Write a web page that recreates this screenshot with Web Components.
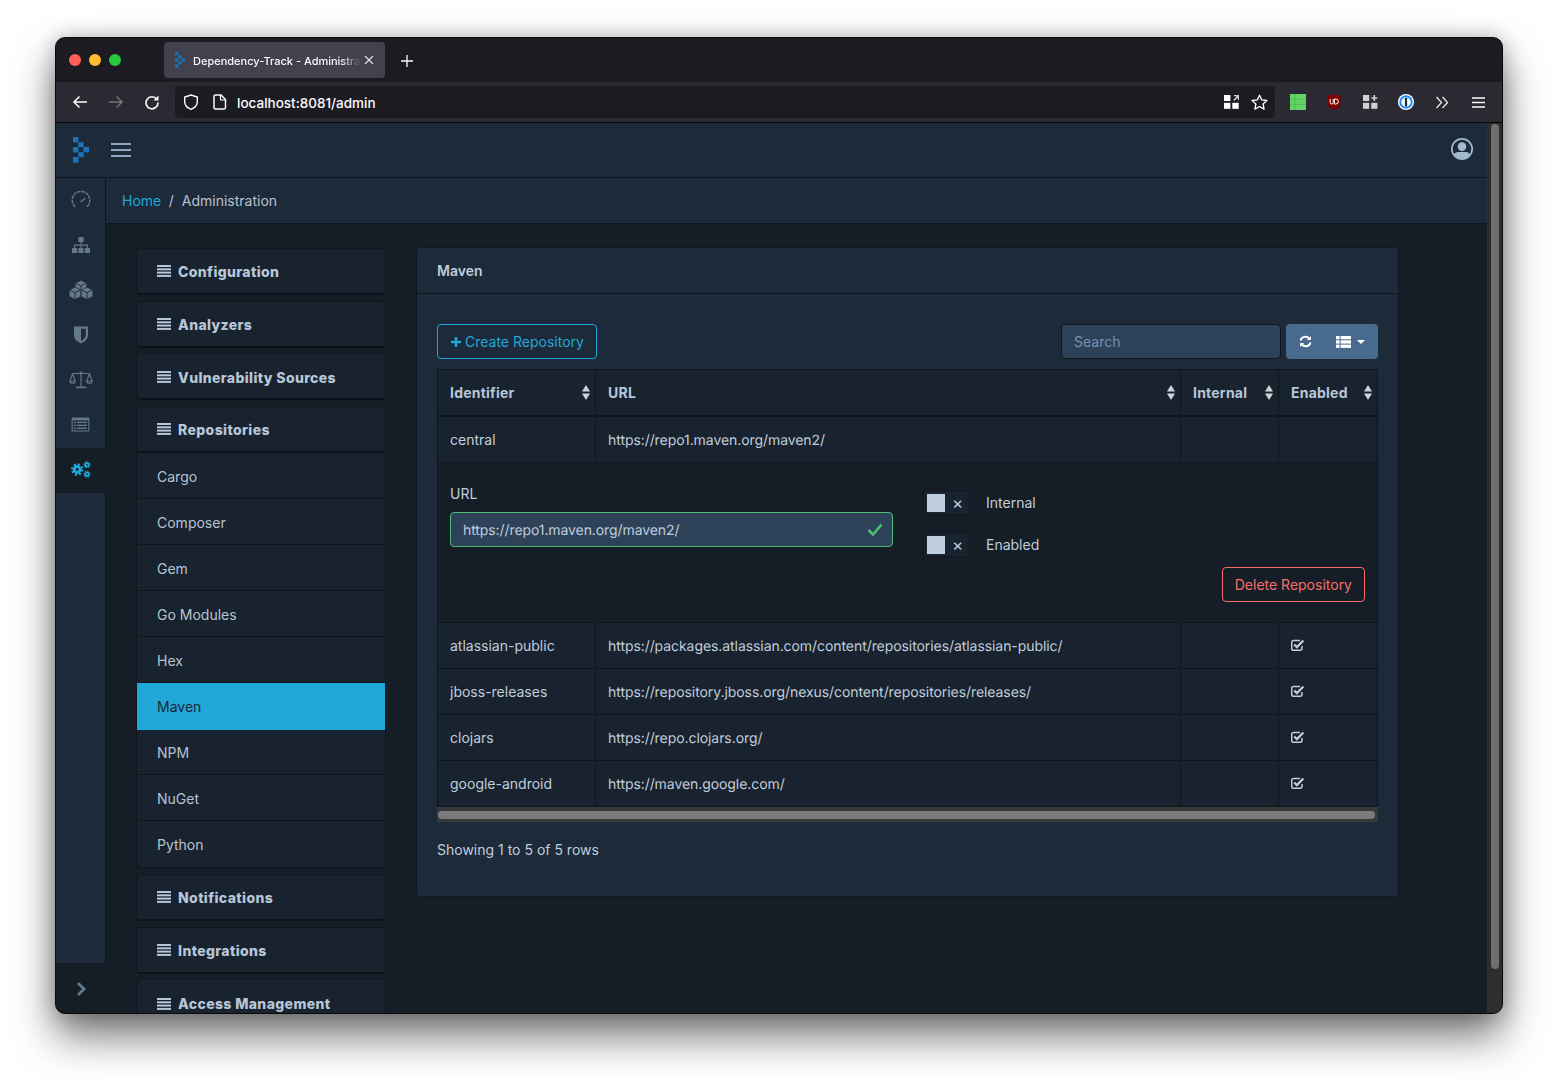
<!DOCTYPE html>
<html lang="en"><head><meta charset="utf-8"><title>Dependency-Track - Administration</title>
<style>
html,body{margin:0;padding:0;background:#fff}
body{font:14px/21px Inter,"Noto Sans",sans-serif;color:#c0cddb;padding:37px 55px 74px;overflow:hidden;height:977px}
</style></head><body>
<browser-window>
  <tab-strip slot="chrome">Dependency-Track - Administration</tab-strip>
  <url-toolbar slot="chrome">localhost:8081/admin</url-toolbar>
  <app-header></app-header>
  <div style="display:flex;flex:1;min-height:0">
    <app-sidebar></app-sidebar>
    <div style="flex:1;min-width:0;display:flex;flex-direction:column">
      <bread-crumb><a>Home</a><span>Administration</span></bread-crumb>
      <admin-layout>
        <admin-nav slot="nav">
          <nav-card>Configuration</nav-card>
          <nav-card>Analyzers</nav-card>
          <nav-card>Vulnerability Sources</nav-card>
          <nav-card>Repositories</nav-card>
          <nav-group>
            <nav-item>Cargo</nav-item><nav-item>Composer</nav-item><nav-item>Gem</nav-item><nav-item>Go Modules</nav-item><nav-item>Hex</nav-item><nav-item active>Maven</nav-item><nav-item>NPM</nav-item><nav-item>NuGet</nav-item><nav-item>Python</nav-item>
          </nav-group>
          <nav-card>Notifications</nav-card>
          <nav-card>Integrations</nav-card>
          <nav-card>Access Management</nav-card>
        </admin-nav>
        <repo-panel heading="Maven">
          <repo-toolbar><span slot="create">Create Repository</span></repo-toolbar>
          <repo-table>
            <repo-head></repo-head>
            <repo-row><span slot="id">central</span><span slot="url">https://repo1.maven.org/maven2/</span></repo-row>
            <repo-detail></repo-detail>
            <repo-row enabled><span slot="id">atlassian-public</span><span slot="url">https://packages.atlassian.com/content/repositories/atlassian-public/</span></repo-row>
            <repo-row enabled><span slot="id">jboss-releases</span><span slot="url">https://repository.jboss.org/nexus/content/repositories/releases/</span></repo-row>
            <repo-row enabled><span slot="id">clojars</span><span slot="url">https://repo.clojars.org/</span></repo-row>
            <repo-row enabled><span slot="id">google-android</span><span slot="url">https://maven.google.com/</span></repo-row>
          </repo-table>
          <h-scroll></h-scroll>
          <div style="margin-top:17px">Showing 1 to 5 of 5 rows</div>
        </repo-panel>
      </admin-layout>
    </div>
  </div>
</browser-window>
<script>
const BG='#1c2a39';
const cube=(x,y)=>`<path d="M${x} ${y-6.2}l5.800 2.700v6.600l-5.800 2.900-5.800-2.900v-6.600z" fill="currentColor" stroke="${BG}" stroke-width=".7"/><path d="M${x-5.200} ${y-3.200}l5.200 2.500 5.200-2.500M${x} ${y-.7}v6.400" stroke="${BG}" stroke-width=".9" fill="none"/>`;
const gear=(x,y,r,s)=>`<circle cx="${x}" cy="${y}" r="${r}" fill="none" stroke="currentColor" stroke-width="${s}"/><circle cx="${x}" cy="${y}" r="${r+s*.72}" fill="none" stroke="currentColor" stroke-width="${s*.75}" stroke-dasharray="${(r+s*.72)*.785*.5} ${(r+s*.72)*.785*.5}"/>`;
const ICONS={
 logo:['0 0 16 26',`<g fill="#1d71b8"><rect x="0" y="0" width="5.4" height="5.4"/><rect x="5.2" y="5.2" width="5.4" height="5"/><rect x="0" y="10" width="5.4" height="5.4"/><rect x="10.4" y="10" width="5.6" height="5.4"/><rect x="5.2" y="15.2" width="5.4" height="5"/><rect x="0" y="20" width="5.4" height="5.8"/></g>`],
 burger:['0 0 20 16',`<g fill="#8fa5bd"><rect y="1" width="20" height="2"/><rect y="7" width="20" height="2"/><rect y="13" width="20" height="2"/></g>`],
 user:['0 0 24 24',`<circle cx="12" cy="12" r="11" fill="#a2b9d0"/><circle cx="12" cy="12" r="9.3" fill="#1c2a39"/><clipPath id="c"><circle cx="12" cy="12" r="10"/></clipPath><g clip-path="url(#c)" fill="#a2b9d0"><circle cx="12" cy="9.6" r="4.3"/><path d="M3 24v-4.500c0-3 3-4.600 5.500-4.600h7c2.500 0 5.500 1.600 5.500 4.600V24z"/></g>`],
 tach:['0 0 20 20',`<g fill="none" stroke="currentColor" stroke-width="1.5"><path d="M4.200 16.800A8.800 8.800 0 1 1 15.800 16.800" stroke-dasharray="3.600 .7"/><path d="M10 11.500l3.800-2.700" stroke-linecap="round"/></g>`],
 sitemap:['0 0 20 20',`<g fill="currentColor"><rect x="7.400" y="2" width="5.200" height="5" rx=".6"/><rect x="1" y="13" width="5.200" height="5" rx=".6"/><rect x="7.400" y="13" width="5.200" height="5" rx=".6"/><rect x="13.800" y="13" width="5.200" height="5" rx=".6"/></g><path d="M10 7v6M3.600 13v-2.900h12.800V13" fill="none" stroke="currentColor" stroke-width="1.100"/>`],
 cubes:['0 0 24 20',cube(12,6.6)+cube(6,13.4)+cube(18,13.4)],
 shield:['0 0 20 20',`<path d="M3 1.500h14v8.500c0 4.300-3.600 6.800-7 8.500-3.400-1.700-7-4.200-7-8.500z" fill="currentColor"/><path d="M10 3.800h4.800V10c0 2.900-2.500 4.700-4.800 6z" fill="#1c2a39"/>`],
 scale:['0 0 24 20',`<g fill="none" stroke="currentColor" stroke-width="1.100"><path d="M3.500 3.500h17M12 3v14M7 17.400h10" /><path d="M3.500 3.800.8 11.200M3.500 3.800l2.800 7.400M20.500 3.800l-2.800 7.400M20.500 3.800l2.700 7.400"/><path d="M.8 11.300h5.500a2.800 2.600 0 0 1-5.500 0zM17.700 11.300h5.500a2.800 2.600 0 0 1-5.500 0z"/></g><circle cx="12" cy="3" r="1.500" fill="currentColor"/><rect x="6.800" y="16.800" width="10.400" height="1.400" fill="currentColor"/>`],
 listalt:['0 0 20 16',`<rect x=".5" y=".5" width="19" height="15" rx="1.500" fill="currentColor"/><rect x="1.700" y="3.600" width="16.600" height="10.700" fill="#1c2a39"/><g fill="currentColor"><rect x="3" y="5" width="2.400" height="1.500"/><rect x="3" y="8.200" width="2.400" height="1.500"/><rect x="3" y="11.300" width="2.400" height="1.500"/><rect x="6.500" y="5" width="10.500" height="1.500"/><rect x="6.500" y="8.200" width="10.500" height="1.500"/><rect x="6.500" y="11.300" width="10.500" height="1.500"/></g>`],
 cogs:['0 0 20 17',gear(6.200,8.500,2.900,3)+gear(16,3.800,1.700,1.700)+gear(16,13.200,1.700,1.700)],
 chevron:['0 0 10 16',`<path d="M2 2l6 6-6 6" fill="none" stroke="currentColor" stroke-width="2.800"/>`],
 lines:['0 0 14 12',`<g fill="currentColor"><rect width="14" height="2"/><rect y="3.300" width="14" height="2"/><rect y="6.600" width="14" height="2"/><rect y="9.900" width="14" height="2"/></g>`],
 plus:['0 0 12 12',`<path d="M6 1v10M1 6h10" stroke="currentColor" stroke-width="2.600"/>`],
 refresh:['0 0 14 14',`<g fill="none" stroke="#fff" stroke-width="2.100"><path d="M1.700 6a5.300 5.300 0 0 1 9.300-2.200"/><path d="M12.300 8a5.300 5.300 0 0 1-9.300 2.200"/></g><path d="M12.800 1v4.400H8.400zM1.200 13V8.600h4.400z" fill="#fff"/>`],
 cols:['0 0 15 12',`<g fill="#fff"><rect width="3.600" height="3.300"/><rect x="4.600" width="10.400" height="3.300"/><rect y="4.300" width="3.600" height="3.300"/><rect x="4.600" y="4.300" width="10.400" height="3.300"/><rect y="8.600" width="3.600" height="3.300"/><rect x="4.600" y="8.600" width="10.400" height="3.300"/></g>`],
 caret:['0 0 8 4',`<path d="M0 0h8L4 4z" fill="#fff"/>`],
 sort:['0 0 8 15',`<path d="M4 0l4 6.500H0zM4 15l4-6.500H0z" fill="#cfd3d7"/>`],
 check:['0 0 16 13',`<path d="M1.500 7l4.500 4.500L14.500 1.500" fill="none" stroke="#4dbd74" stroke-width="2.600"/>`],
 checksq:['0 0 14 12',`<path d="M11 7v2.500A1.800 1.800 0 0 1 9.200 11.300H2.500A1.800 1.800 0 0 1 .7 9.500V3.300A1.800 1.800 0 0 1 2.500 1.500H9" fill="none" stroke="#c0cddb" stroke-width="1.500"/><path d="M3.200 5.500l2.700 2.600 6.500-6.600" fill="none" stroke="#c0cddb" stroke-width="2.200"/>`],
 back:['0 0 16 14',`<path d="M15 7H2M7.500 1.500 2 7l5.500 5.500" fill="none" stroke="currentColor" stroke-width="1.500"/>`],
 fwd:['0 0 16 14',`<path d="M1 7h13M8.500 1.500 14 7l-5.500 5.500" fill="none" stroke="currentColor" stroke-width="1.500"/>`],
 reload:['0 0 16 16',`<path d="M12.800 5.200A6 6 0 1 0 14 8.500" fill="none" stroke="currentColor" stroke-width="1.600"/><path d="M14.500 1.500v5h-5z" fill="currentColor"/>`],
 tshield:['0 0 16 16',`<path d="M8 1l6.300 2v5c0 3.700-3 6-6.300 7.300C4.700 14 1.700 11.700 1.700 8V3z" fill="none" stroke="currentColor" stroke-width="1.400"/>`],
 page:['0 0 14 16',`<path d="M2.500 1h5.500l4.500 4.500v8a1.500 1.500 0 0 1-1.500 1.500H2.500A1.500 1.500 0 0 1 1 13.500v-11A1.500 1.500 0 0 1 2.500 1z" fill="none" stroke="currentColor" stroke-width="1.500"/><path d="M7.500 1v5h5" fill="none" stroke="currentColor" stroke-width="1.200"/>`],
 qr:['0 0 15 14',`<g fill="#fff"><rect width="6.400" height="6"/><rect y="7.800" width="6.400" height="6"/><rect x="8.300" y="7.800" width="6.400" height="6"/></g><path d="M9.800 5.500 13.800 1M10 .6h4.400V5" fill="none" stroke="#cfcfd4" stroke-width="1.400"/>`],
 star:['0 0 17 16',`<path d="M8.500 1.200l2.200 4.700 5.200.6-3.800 3.500 1 5.100-4.600-2.600-4.600 2.600 1-5.100L1.100 6.500l5.200-.6z" fill="none" stroke="#fff" stroke-width="1.300" stroke-linejoin="round"/>`],
 sheet:['0 0 16 16',`<rect width="16" height="16" fill="#62d467"/><path d="M0 5.300h16M0 10.600h16M5 0v16" stroke="#52b558" stroke-width=".7"/>`],
 ublock:['0 0 14 16',`<path d="M7 .3l6.600 1.700v6.500c0 3.700-3.300 6-6.600 7.300C3.700 14.500.4 12.200.4 8.500V2z" fill="#800000"/><path d="M3.200 5v3.500a1.500 1.500 0 0 0 3 0V5M7.300 5v5h1.600a2.500 2.500 0 0 0 0-5z" fill="none" stroke="#fff" stroke-width="1"/>`],
 extg:['0 0 15 14',`<g fill="#cfcfd4"><rect width="6.200" height="6"/><rect y="7.800" width="6.200" height="6"/><rect x="8.200" y="7.800" width="6.200" height="6"/></g><path d="M11.300 0v6M8.300 3h6" stroke="#cfcfd4" stroke-width="1.700"/>`],
 onep:['0 0 16 16',`<circle cx="8" cy="8" r="8" fill="#fff"/><circle cx="8" cy="8" r="6.700" fill="#1a8cff"/><circle cx="8" cy="8" r="4.700" fill="#fff"/><rect x="6.900" y="3.800" width="2.200" height="8.400" rx=".5" fill="#16273f"/>`],
 more:['0 0 14 13',`<path d="M1.500 1l5 5.500-5 5.500M7.500 1l5 5.500-5 5.500" fill="none" stroke="#e8e8ea" stroke-width="1.300"/>`],
 menu:['0 0 13 11',`<path d="M0 1h13M0 5.500h13M0 10h13" stroke="#fbfbfe" stroke-width="1.300"/>`],
 close:['0 0 10 10',`<path d="M1 1l8 8M9 1L1 9" stroke="#e4e4e8" stroke-width="1.100"/>`],
 add:['0 0 12 12',`<path d="M6 0v12M0 6h12" stroke="#fbfbfe" stroke-width="1.300"/>`]
};
const def=(n,html)=>{class C extends HTMLElement{constructor(){super();this.attachShadow({mode:'open'}).innerHTML=typeof html==='function'?html(this):html}}customElements.define(n,C)};
class UiIcon extends HTMLElement{connectedCallback(){if(this.shadowRoot)return;const[v,b]=ICONS[this.getAttribute('name')];const w=this.getAttribute('w'),h=this.getAttribute('h');this.attachShadow({mode:'open'}).innerHTML=`<style>:host{display:inline-flex;flex:none;width:${w}px;height:${h}px}svg{display:block}</style><svg xmlns="http://www.w3.org/2000/svg" viewBox="${v}" width="${w}" height="${h}">${b}</svg>`}}
customElements.define('ui-icon',UiIcon);

def('browser-window',`<style>
:host{display:flex;flex-direction:column;box-sizing:border-box;width:1448px;height:977px;border:1px solid #0a0a0c;border-radius:10px;overflow:hidden;background:#151e27;box-shadow:0 22px 42px rgba(0,0,0,.55),0 0 20px rgba(0,0,0,.22)}
.v{flex:1;min-height:0;display:flex}
.a{flex:none;width:1431px;display:flex;flex-direction:column;min-height:0;overflow:hidden}
.s{flex:none;width:15px;background:#2e2e2e;padding:1px 3px 44px 4px;box-sizing:border-box}
.s i{display:block;height:100%;background:#6f6f6f;border-radius:4px}
</style><slot name="chrome"></slot><div class="v"><div class="a"><slot></slot></div><div class="s"><i></i></div></div>`);

def('tab-strip',`<style>
:host{display:flex;align-items:flex-start;height:44px;background:#1c1b22;padding-left:13px;flex:none}
.d{display:flex;gap:8px;margin-top:16px}.d i{width:12px;height:12px;border-radius:50%}
.t{margin:4px 0 0 43px;width:221px;height:36px;box-sizing:border-box;background:#42414d;border-radius:4px;display:flex;align-items:center;padding-left:11px;color:#fbfbfe;font-size:11px;font-weight:500}
.l{margin-left:8px;width:168px;padding-top:2px;white-space:nowrap;overflow:hidden;-webkit-mask-image:linear-gradient(90deg,#000 88%,transparent);mask-image:linear-gradient(90deg,#000 88%,transparent)}
.x{margin-left:3px}.p{margin:17px 0 0 16px}
</style><div class="d"><i style="background:#ff5f57"></i><i style="background:#febc2e"></i><i style="background:#28c840"></i></div>
<div class="t"><ui-icon name="logo" w="10" h="16"></ui-icon><div class="l"><slot></slot></div><ui-icon class="x" name="close" w="10" h="10"></ui-icon></div><ui-icon class="p" name="add" w="12" h="12"></ui-icon>`);

def('url-toolbar',`<style>
:host{display:flex;align-items:center;height:41px;box-sizing:border-box;border-bottom:1px solid #08080a;background:#2b2a33;padding-left:6px;color:#fbfbfe;flex:none}
.b{width:36px;height:32px;display:flex;align-items:center;justify-content:center;flex:none}
.u{margin:0 5px;width:1100px;height:32px;box-sizing:border-box;background:#1c1b22;border-radius:4px;display:flex;align-items:center;padding-left:8px;font-size:13.5px;font-weight:500;color:#fbfbfe}
.m{flex:1}.w{padding-top:2px}
</style>
<div class="b"><ui-icon name="back" w="16" h="14"></ui-icon></div><div class="b" style="color:#75747b"><ui-icon name="fwd" w="16" h="14"></ui-icon></div><div class="b"><ui-icon name="reload" w="16" h="16"></ui-icon></div>
<div class="u"><ui-icon name="tshield" w="16" h="16"></ui-icon><ui-icon name="page" w="14" h="16" style="margin:0 10px 0 14px"></ui-icon><span class="w"><slot></slot></span><div class="m"></div><ui-icon name="qr" w="15" h="14" style="margin-right:12px"></ui-icon><ui-icon name="star" w="17" h="16" style="margin-right:7px"></ui-icon></div>
<div class="b"><ui-icon name="sheet" w="16" h="16"></ui-icon></div><div class="b"><ui-icon name="ublock" w="14" h="16"></ui-icon></div><div class="b"><ui-icon name="extg" w="15" h="14"></ui-icon></div><div class="b"><ui-icon name="onep" w="16" h="16"></ui-icon></div><div class="b"><ui-icon name="more" w="14" h="13"></ui-icon></div><div class="b"><ui-icon name="menu" w="13" h="11"></ui-icon></div>`);

def('app-header',`<style>
:host{display:flex;align-items:center;flex:none;height:55px;box-sizing:border-box;border-bottom:1px solid #0e151c;background:#1c2a39;padding:0 13px 1px 17px}
.m{flex:1}</style><ui-icon name="logo" w="16" h="26"></ui-icon><ui-icon name="burger" w="20" h="16" style="margin-left:22px"></ui-icon><div class="m"></div><ui-icon name="user" w="24" h="24" style="margin-top:-2px"></ui-icon>`);

def('app-sidebar',`<style>
:host{display:flex;flex-direction:column;flex:none;width:50px;color:#64798c}
.n{flex:1;background:#1c2a39;border-right:1px solid #0e151c}
.i{height:45px;display:flex;align-items:center;justify-content:center;box-sizing:border-box;padding-bottom:2px}
.a{background:#151e27;color:#20a8d8;margin-right:-1px}
.f{height:50px;flex:none;box-sizing:border-box;padding-top:2px;display:flex;align-items:center;justify-content:center;color:#64798c}
</style><div class="n">
<div class="i"><ui-icon name="tach" w="20" h="20"></ui-icon></div>
<div class="i"><ui-icon name="sitemap" w="20" h="20"></ui-icon></div>
<div class="i"><ui-icon name="cubes" w="24" h="20"></ui-icon></div>
<div class="i"><ui-icon name="shield" w="20" h="20"></ui-icon></div>
<div class="i"><ui-icon name="scale" w="24" h="20"></ui-icon></div>
<div class="i"><ui-icon name="listalt" w="19" h="15"></ui-icon></div>
<div class="i a"><ui-icon name="cogs" w="20" h="17"></ui-icon></div>
</div><div class="f"><ui-icon name="chevron" w="10" h="16"></ui-icon></div>`);

def('bread-crumb',`<style>
:host{display:flex;align-items:center;flex:none;height:46px;box-sizing:border-box;border-bottom:1px solid #0e151c;background:#1c2a39;padding:0 16px 1px;color:#b5c3d2}
::slotted(a){color:#20a8d8}
::slotted(span)::before{content:"/";padding:0 8px 0 7.500px;color:#b5c3d2}
</style><slot></slot>`);

def('admin-layout',`<style>:host{display:flex;flex:1;min-height:0;overflow:hidden;align-items:flex-start;gap:30px;padding:24px 30px 0;background:#151e27}</style><slot name="nav"></slot><slot></slot>`);
def('admin-nav',`<style>:host{display:block;flex:none;width:250px}</style><slot></slot>`);
def('nav-card',`<style>:host{display:flex;align-items:center;box-sizing:border-box;height:47px;margin-bottom:5.67px;background:#18232f;border:1px solid #10171f;border-bottom:2px solid #0c1218;border-radius:4px;padding:1px 20px 0;font-weight:800;letter-spacing:.38px;color:#b7c6d8;font-size:14px}
:host(:first-child){padding-top:0}
:host(:nth-child(3)){padding-top:2px}
:host(:last-child){padding-top:3px}
ui-icon{margin-right:7px}</style><ui-icon name="lines" w="14" h="12"></ui-icon><slot></slot>`);
def('nav-group',`<style>:host{display:block;margin:-5.67px 0 6px;background:#18232f;border:1px solid #0e151c;border-top:0;border-radius:0 0 4px 4px;box-sizing:border-box}</style><slot></slot>`);
def('nav-item',`<style>:host{display:flex;align-items:center;height:46px;box-sizing:border-box;padding:2px 20px 0;border-bottom:1px solid #0e151c;color:#b5c3d2}
:host(:last-child){border-bottom:0;padding-top:1px}
:host([active]){background:#20a8d8;color:#1a2733;border-bottom:0;height:47px;margin-bottom:-1px;padding-top:0}</style><slot></slot>`);

def('repo-panel',t=>`<style>:host{display:block;flex:none;width:983px;box-sizing:border-box;height:650px;margin-top:-1px;background:#1c2a39;border:1px solid #10171f;border-radius:4px}
h2{margin:0;font:600 14px/21px Inter,"Noto Sans",sans-serif;height:46px;box-sizing:border-box;padding:12px 20px;border-bottom:1px solid #0e151c;color:#c0cddb}
.b{padding:30px 20px}</style><h2>${t.getAttribute('heading')}</h2><div class="b"><slot></slot></div>`);

def('repo-toolbar',`<style>:host{display:flex;align-items:center;height:35px;margin-bottom:10px}
.c{display:flex;align-items:center;height:35px;box-sizing:border-box;padding:0 12px 0 12px;border:1px solid #20a8d8;border-radius:4px;color:#20a8d8}
.c ui-icon{margin-right:3px}.m{flex:1}
input{width:220px;height:35px;box-sizing:border-box;padding:0 12px;background:#2d4259;border:1px solid #10171f;border-radius:4px;font:14px Inter,sans-serif;color:#c0cddb;outline:0}
input::placeholder{color:#7391b1;opacity:1}
.g{margin-left:5px;width:92px;height:35px;background:#486a8f;border-radius:4px;display:flex;align-items:center;box-sizing:border-box;padding-left:13px}
</style><div class="c"><ui-icon name="plus" w="12" h="12"></ui-icon><slot name="create"></slot></div><div class="m"></div><input placeholder="Search"><div class="g"><ui-icon name="refresh" w="13" h="13"></ui-icon><ui-icon name="cols" w="15" h="12" style="margin-left:24px"></ui-icon><ui-icon name="caret" w="8" h="4" style="margin-left:6px"></ui-icon></div>`);

def('repo-table',`<style>:host{display:block;width:941px;border:solid #0e151c;border-width:1px 1px 0 1px;box-sizing:border-box}</style><slot></slot>`);
const GRID='display:grid;grid-template-columns:158px 585px 98px 98px;';
def('repo-head',`<style>:host{${GRID}height:47px;box-sizing:border-box;background:#18232f;border-bottom:2px solid #0e151c;color:#b7c6d8}
div{display:flex;align-items:center;padding:0 5.5px 0 12px;box-sizing:border-box;border-right:1px solid #0e151c;justify-content:space-between;font-weight:700;letter-spacing:.22px}
div:last-child{border-right:0}</style>
<div>Identifier<ui-icon name="sort" w="8" h="15"></ui-icon></div><div>URL<ui-icon name="sort" w="8" h="15"></ui-icon></div><div>Internal<ui-icon name="sort" w="8" h="15"></ui-icon></div><div>Enabled<ui-icon name="sort" w="8" h="15"></ui-icon></div>`);
def('repo-row',t=>`<style>:host{${GRID}height:46px;box-sizing:border-box;background:#18232f;border-bottom:1px solid #0e151c}
div{display:flex;align-items:center;padding:0 12px;box-sizing:border-box;border-right:1px solid #0e151c;white-space:nowrap}
.u{text-rendering:geometricPrecision;letter-spacing:-.07px;padding-top:2px}
div:last-child{border-right:0}
ui-icon{margin-top:-1px}</style><div><slot name="id"></slot></div><div class="u"><slot name="url"></slot></div><div></div><div>${t.hasAttribute('enabled')?'<ui-icon name="checksq" w="14" h="12"></ui-icon>':''}</div>`);
def('repo-detail',`<style>:host{display:flex;height:160px;box-sizing:border-box;padding:20px 12px 0;background:#151e27;border-bottom:1px solid #0e151c}
.l{width:443px;flex:none}
.f{display:flex;align-items:center;height:35px;margin-top:8px;box-sizing:border-box;padding:0 9px 0 12px;background:#2d4259;border:1px solid #4dbd74;border-radius:4px;justify-content:space-between;color:#c0cddb}
.f span{text-rendering:geometricPrecision;letter-spacing:-.09px;padding-top:2px}
.r{flex:1;margin-left:30px;padding-top:7px;display:flex;flex-direction:column}
.t{display:flex;align-items:center;height:25px;margin-bottom:17px}
.s{width:47px;height:25px;box-sizing:border-box;border:1px solid #10171f;border-radius:3px;background:#18232f;padding:3px;display:flex;align-items:center;margin-right:16px;color:#c0cddb}
.s i{width:18px;height:18px;background:#c0cfe0;display:block;margin-right:7px;flex:none}
.s b{font:400 17px/18px Inter,sans-serif}
.d{align-self:flex-end;margin-top:-7px;height:35px;box-sizing:border-box;border:1px solid #f86c6b;border-radius:4px;color:#f86c6b;padding:0 12px;display:flex;align-items:center}
</style><div class="l">URL<div class="f"><span>https://repo1.maven.org/maven2/</span><ui-icon name="check" w="16" h="13"></ui-icon></div></div>
<div class="r"><div class="t"><span class="s"><i></i><b>×</b></span>Internal</div><div class="t"><span class="s"><i></i><b>×</b></span>Enabled</div><div class="d">Delete Repository</div></div>`);
def('h-scroll',`<style>:host{display:block;width:941px;height:15px;background:#37393b;box-sizing:border-box;padding:4px 3px 3px 1px}i{display:block;height:8px;background:#7a7a7a;border-radius:4px}</style><i></i>`);
</script>
</body></html>
